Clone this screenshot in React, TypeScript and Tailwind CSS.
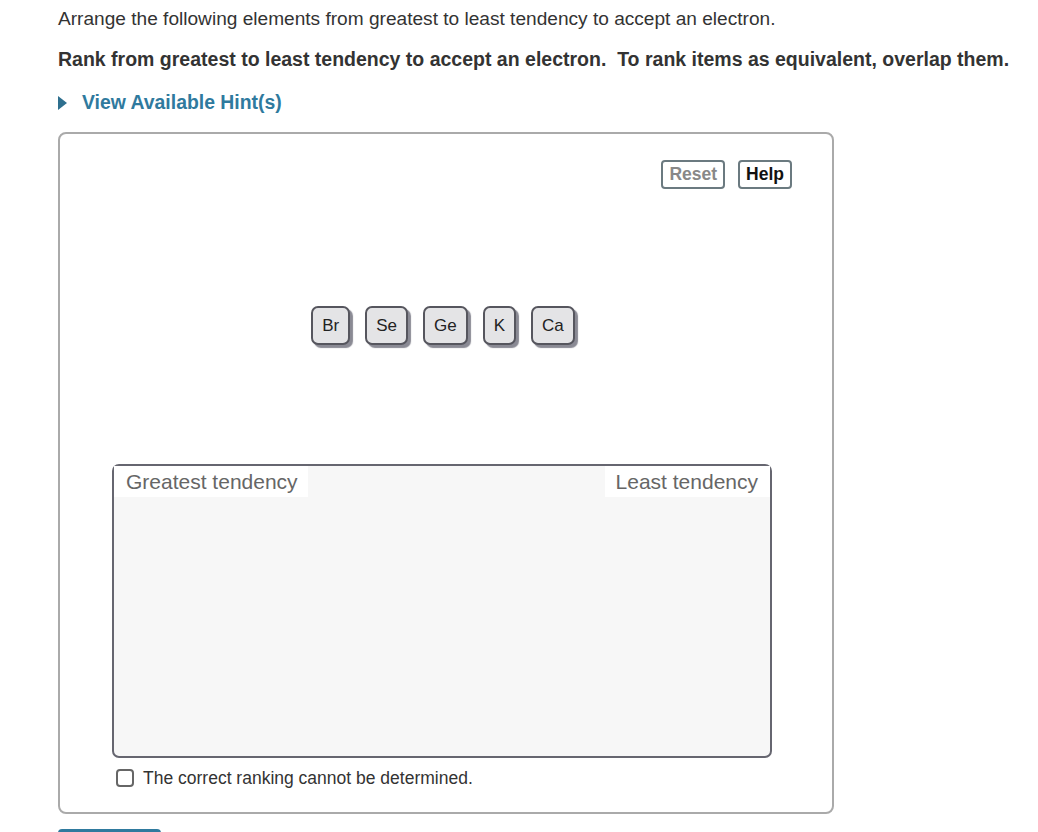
import React from "react";

const tiles = ["Br", "Se", "Ge", "K", "Ca"];

export default function App() {
  return (
    <div className="bg-white w-[1038px] h-[832px] overflow-hidden text-[#333]" style={{ fontFamily: '"Liberation Sans", Arial, sans-serif' }}>
      <div className="pl-[58px] pt-[8px]">
        <p className="text-[19.1px] leading-[22px]">Arrange the following elements from greatest to least tendency to accept an electron.</p>
        <p className="text-[19.5px] leading-[22px] font-bold mt-[18px]">Rank from greatest to least tendency to accept an electron.&nbsp; To rank items as equivalent, overlap them.</p>
        <div className="flex items-center mt-[22px] h-[22px]">
          <svg width="10" height="16" viewBox="0 0 10 16" className="mr-[14px]">
            <polygon points="0,1 9,8 0,15" fill="#2e6f8e" />
          </svg>
          <span className="text-[19.4px] font-bold text-[#2f7a9e]">View Available Hint(s)</span>
        </div>
        <div className="mt-[18px] w-[776px] h-[682px] border-2 border-[#aaaaaa] rounded-[8px] flex flex-col">
          <div className="flex justify-end gap-[13px] pr-[40px] pt-[26px]">
            <div className="h-[29px] px-[6px] border-2 border-[#6b7a80] rounded-[4px] flex items-center text-[17.5px] font-bold text-[#888]">Reset</div>
            <div className="h-[29px] px-[6px] border-2 border-[#6b7a80] rounded-[4px] flex items-center text-[17.5px] font-bold text-[#111]">Help</div>
          </div>
          <div className="flex justify-center gap-[15px] mt-[117px] pr-[6px]">
            {tiles.map((t) => (
              <div key={t} className="h-[39px] px-[9px] flex items-center border-2 border-[#56565e] rounded-[7px] bg-[#e4e4e6] text-[17px] text-[#222] shadow-[3px_3px_1px_#8a8a94]">{t}</div>
            ))}
          </div>
          <div className="ml-[52px] mt-[119px] w-[660px] h-[294px] border-2 border-[#666670] rounded-[7px] bg-[#f7f7f7] flex justify-between items-start">
            <div className="bg-white h-[31px] pl-[12px] pr-[10px] flex items-center text-[21px] text-[#666]">Greatest tendency</div>
            <div className="bg-white h-[31px] pl-[11px] pr-[12px] flex items-center text-[21px] text-[#666]">Least tendency</div>
          </div>
          <div className="ml-[56px] mt-[7px] flex items-center">
            <div className="w-[18px] h-[18px] border-2 border-[#666] rounded-[4px] bg-white mr-[9px]" />
            <span className="text-[17.5px] text-[#333]">The correct ranking cannot be determined.</span>
          </div>
        </div>
        <div className="mt-[15px] w-[103px] h-[20px] bg-[#2f7a9e] rounded-t-[4px]" />
      </div>
    </div>
  );
}
